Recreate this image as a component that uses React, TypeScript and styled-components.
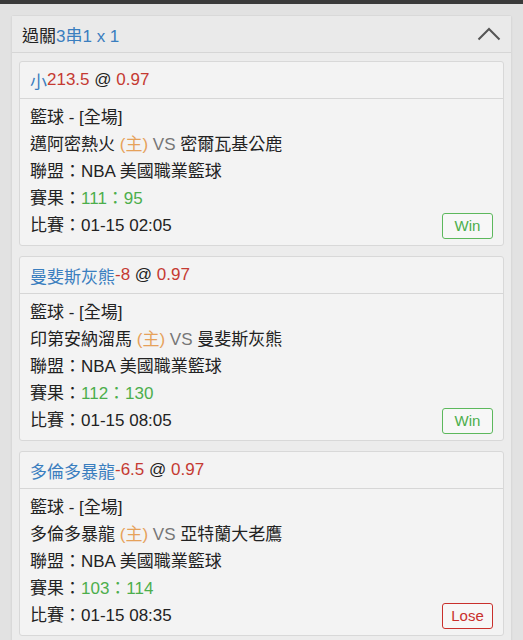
import styled, { createGlobalStyle } from "styled-components";

const GlobalStyle = createGlobalStyle`
  html, body {
    margin: 0;
    padding: 0;
    background: #e2e2e2;
    font-family: "Liberation Sans", "Noto Sans CJK TC", Arial, sans-serif;
    color: #222;
  }
`;

const TopBar = styled.div`
  height: 4px;
  background: #3a3a3a;
`;

const Page = styled.div`
  padding: 11px 11px 0 11px;
`;

const Panel = styled.div`
  background: #ececec;
  border: 1px solid #d9d9d9;
  border-radius: 3px;
  box-shadow: 0 1px 2px rgba(0, 0, 0, 0.05);
`;

const PanelHeader = styled.div`
  height: 36px;
  display: flex;
  align-items: center;
  justify-content: space-between;
  padding: 0 10px 0 10px;
  background: #eaeaea;
  border-bottom: 1px solid #d6d6d6;
  font-size: 17px;
`;

const PanelBody = styled.div`
  display: flex;
  flex-direction: column;
  gap: 10px;
  padding: 8px 7px 6px 7px;
`;

const Card = styled.div`
  background: #f3f3f3;
  border: 1px solid #d8d8d8;
  border-radius: 3px;
`;

const CardHeader = styled.div`
  height: 36px;
  display: flex;
  align-items: center;
  padding: 0 10px;
  border-bottom: 1px solid #d6d6d6;
  font-size: 17px;
`;

const CardBody = styled.div`
  padding: 5px 10px 6px 10px;
  font-size: 17px;
  line-height: 27px;
`;

const Line = styled.div`
  display: flex;
  align-items: center;
  justify-content: space-between;
  height: 27px;
`;

const Tone = styled.span<{ $c: "blue" | "red" | "orange" | "gray" | "green" }>`
  color: ${(p) =>
    ({
      blue: "#3a7ebf",
      red: "#c53a32",
      orange: "#e6a15a",
      gray: "#777777",
      green: "#4cae4c",
    })[p.$c]};
`;

const Badge = styled.span<{ $win: boolean }>`
  display: inline-flex;
  align-items: center;
  justify-content: center;
  width: 49px;
  height: 24px;
  border: 1px solid ${(p) => (p.$win ? "#5cb85c" : "#c9302c")};
  color: ${(p) => (p.$win ? "#4cae4c" : "#c9302c")};
  border-radius: 3px;
  font-size: 15px;
  line-height: 1;
  background: #f7f7f7;
`;

const Chevron = () => (
  <svg width="24" height="14" viewBox="0 0 24 14">
    <path d="M1.5 12.5 L12 2 L22.5 12.5" fill="none" stroke="#555" strokeWidth="2" />
  </svg>
);

type Bet = {
  pick: string;
  line: string;
  home: string;
  away: string;
  score: string;
  time: string;
  win: boolean;
};

const bets: Bet[] = [
  { pick: "小", line: "213.5", home: "邁阿密熱火", away: "密爾瓦基公鹿", score: "111：95", time: "01-15 02:05", win: true },
  { pick: "曼斐斯灰熊", line: "-8", home: "印第安納溜馬", away: "曼斐斯灰熊", score: "112：130", time: "01-15 08:05", win: true },
  { pick: "多倫多暴龍", line: "-6.5", home: "多倫多暴龍", away: "亞特蘭大老鷹", score: "103：114", time: "01-15 08:35", win: false },
];

export default function App() {
  return (
    <>
      <GlobalStyle />
      <TopBar />
      <Page>
        <Panel>
          <PanelHeader>
            <span>
              過關<Tone $c="blue">3串1 x 1</Tone>
            </span>
            <Chevron />
          </PanelHeader>
          <PanelBody>
            {bets.map((bet, index) => (
              <Card key={index}>
                <CardHeader>
                  <Tone $c="blue">{bet.pick}</Tone>
                  <Tone $c="red">{bet.line}</Tone>
                  &nbsp;@&nbsp;
                  <Tone $c="red">0.97</Tone>
                </CardHeader>
                <CardBody>
                  <Line>籃球 - [全場]</Line>
                  <Line>
                    <span>
                      {bet.home} <Tone $c="orange">(主)</Tone> <Tone $c="gray">VS</Tone> {bet.away}
                    </span>
                  </Line>
                  <Line>聯盟：NBA 美國職業籃球</Line>
                  <Line>
                    <span>
                      賽果：<Tone $c="green">{bet.score}</Tone>
                    </span>
                  </Line>
                  <Line>
                    <span>比賽：{bet.time}</span>
                    <Badge $win={bet.win}>{bet.win ? "Win" : "Lose"}</Badge>
                  </Line>
                </CardBody>
              </Card>
            ))}
          </PanelBody>
        </Panel>
      </Page>
    </>
  );
}
